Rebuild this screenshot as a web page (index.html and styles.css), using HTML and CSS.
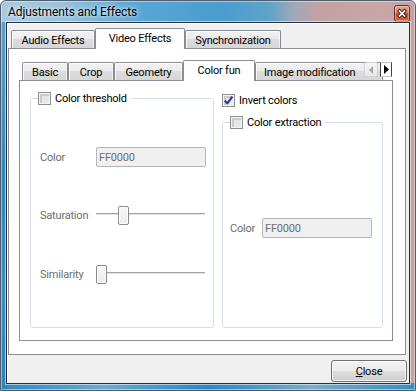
FILE: index.html
```html
<!DOCTYPE html>
<html>
<head>
<meta charset="utf-8">
<link rel="stylesheet" href="styles.css">
</head>
<body>
<div class="window">
  <div class="titlebar">
    <span class="title">Adjustments and Effects</span>
    <span class="xbtn">
      <svg width="16" height="17" viewBox="0 0 16 17">
        <defs>
          <linearGradient id="cg" x1="0" y1="0" x2="0" y2="1">
            <stop offset="0" stop-color="#e9a898"/>
            <stop offset="0.45" stop-color="#d67a66"/>
            <stop offset="0.5" stop-color="#c64a30"/>
            <stop offset="1" stop-color="#d6683e"/>
          </linearGradient>
        </defs>
        <rect x="0.5" y="0.5" width="15" height="16" rx="2.5" fill="url(#cg)" stroke="#6e2a1e"/>
        <rect x="1.5" y="1.5" width="13" height="14" rx="1.5" fill="none" stroke="#ffffff" stroke-opacity="0.35"/>
        <path d="M5.5 6 L10.5 11 M10.5 6 L5.5 11" stroke="#3a1a14" stroke-width="3.4" stroke-linecap="square"/>
        <path d="M5.5 6 L10.5 11 M10.5 6 L5.5 11" stroke="#ffffff" stroke-width="1.7" stroke-linecap="square"/>
      </svg>
    </span>
  </div>
  <div class="client">
    <div class="otabs">
      <div class="tab otab w-audio">Audio Effects</div>
      <div class="tab otab sel w-video">Video Effects</div>
      <div class="tab otab w-sync">Synchronization</div>
    </div>
    <div class="opane">
      <div class="itabs">
        <div class="tab itab w-basic">Basic</div>
        <div class="tab itab w-crop">Crop</div>
        <div class="tab itab w-geo">Geometry</div>
        <div class="tab itab sel w-fun">Color fun</div>
        <div class="tab itab w-img">Image modification</div>
        <div class="scroller">
          <span class="sbtn sbtn-left">
            <svg width="5" height="8" viewBox="0 0 5 8"><path d="M4 0 L0 4 L4 8 Z" fill="#a6a6a6"/></svg>
          </span>
          <span class="sbtn sbtn-right">
            <svg width="5" height="9" viewBox="0 0 5 9"><path d="M0 0 L5 4.5 L0 9 Z" fill="#000"/></svg>
          </span>
        </div>
      </div>
      <div class="ipane">
        <div class="group group-left">
          <div class="gtitle">
            <span class="cb"></span><span>Color threshold</span>
          </div>
          <div class="row row1">
            <span class="lbl lbl-wide">Color</span>
            <span class="field">FF0000</span>
          </div>
          <div class="row row2">
            <span class="lbl lbl-wide">Saturation</span>
            <span class="slider"><span class="thumb thumb-sat"></span></span>
          </div>
          <div class="row row3">
            <span class="lbl lbl-wide">Similarity</span>
            <span class="slider"><span class="thumb"></span></span>
          </div>
        </div>
        <div class="rcol">
          <div class="check-row">
            <span class="cb checked">
              <svg width="11" height="11" viewBox="0 0 11 11"><path d="M1.8 5.6 L4.3 8.4 L9.4 1.6" fill="none" stroke="#1d3f95" stroke-width="2.1" stroke-linejoin="round"/></svg>
            </span>
            <span>Invert colors</span>
          </div>
          <div class="group group-right">
            <div class="gtitle">
              <span class="cb"></span><span>Color extraction</span>
            </div>
            <div class="row row-ext">
              <span class="lbl lbl-narrow">Color</span>
              <span class="field">FF0000</span>
            </div>
          </div>
        </div>
      </div>
    </div>
    <div class="footer">
      <button class="btn"><span class="u">C</span>lose</button>
    </div>
  </div>
</div>
</body>
</html>
```

FILE: styles.css
```css
* {
  box-sizing: border-box;
  margin: 0;
  padding: 0;
}

body {
  margin: 0;
  width: 416px;
  height: 391px;
  overflow: hidden;
  background: #ffffff;
  font-family: Roboto, "Noto Sans", sans-serif;
  font-size: 11px;
  letter-spacing: -0.2px;
  color: #000000;
}

.window {
  width: 416px;
  height: 391px;
  display: flex;
  flex-direction: column;
  border: 1px solid #4e5e6e;
  border-radius: 6px 6px 0 0;
  background:
    linear-gradient(180deg, #5aa0cf 0%, #2f86c0 40%, #3a8ec6 70%, #2a7fbc 100%) 0 21px / 5px 100% no-repeat,
    linear-gradient(90deg, #3585c0 0%, #6aaad6 25%, #2f86c0 50%, #78acd0 75%, #3a8cc4 100%) 0 100% / 100% 7px no-repeat,
    linear-gradient(90deg, #aac9dd 0px, #96c1de 60px, #5ba7d5 130px, #4a9dcf 220px, #5ea3c8 268px, #9ea9b8 292px, #c3a1a3 318px, #c9a6a7 380px, #c3a1a4 416px);
  box-shadow: inset 0 0 0 1px rgba(255, 255, 255, 0.45);
}

.titlebar {
  height: 21px;
  display: flex;
  align-items: flex-start;
}

.title {
  padding-left: 7px;
  margin-top: 4px;
  font-size: 12px;
  letter-spacing: -0.1px;
  line-height: 15px;
  color: #000;
  text-shadow: 0 0 6px rgba(255, 255, 255, 0.9), 0 0 3px rgba(255, 255, 255, 0.8);
}

.xbtn {
  margin-left: auto;
  margin-top: 4px;
  margin-right: 5px;
  width: 16px;
  height: 17px;
  display: block;
}

.xbtn svg {
  display: block;
}

.client {
  margin-left: 5px;
  width: 404px;
  height: 362px;
  border: 1px solid #26303a;
  background: #f0f0f0;
  display: flex;
  flex-direction: column;
  box-shadow: 0 0 0 1px rgba(255, 255, 255, 0.55), inset 1px 1px 0 #ffffff;
}

/* tabs */
.otabs,
.itabs {
  height: 21px;
  display: flex;
  align-items: flex-start;
  position: relative;
  z-index: 2;
}

.otabs {
  margin-top: 5px;
  margin-left: 4px;
}

.tab {
  height: 18px;
  margin-top: 2px;
  border: 1px solid #898c95;
  border-bottom: none;
  border-radius: 2px 2px 0 0;
  background: linear-gradient(180deg, #f2f2f2 0%, #ebebeb 45%, #dddddd 50%, #d6d6d6 100%);
  box-shadow: inset 1px 1px 0 rgba(255, 255, 255, 0.8), inset -1px 0 0 rgba(255, 255, 255, 0.6);
  display: flex;
  align-items: center;
  justify-content: center;
  white-space: nowrap;
  padding-top: 1px;
  flex-shrink: 0;
}

.tab.sel {
  height: 21px;
  margin-top: 0;
  background: #ffffff;
  box-shadow: none;
  padding-top: 0;
  padding-bottom: 2px;
}

.w-audio { width: 84px; }
.w-video { width: 90px; }
.w-sync { width: 96px; }

.opane {
  margin-top: -1px;
  margin-left: 1px;
  width: 398px;
  height: 307px;
  border: 1px solid #898c95;
  background: #ffffff;
  display: flex;
  flex-direction: column;
}

.itabs {
  margin-top: 11px;
  margin-left: 13px;
  width: 370px;
  overflow: hidden;
}

.w-basic { width: 46px; }
.w-crop { width: 46px; }
.w-geo { width: 69px; }
.w-fun { width: 72px; }
.w-img { width: 128px; justify-content: flex-start; padding-left: 8px; }

.scroller {
  position: absolute;
  left: 342px;
  top: 2px;
  display: flex;
  gap: 2px;
}

.sbtn {
  width: 14px;
  height: 15px;
  display: flex;
  align-items: center;
  justify-content: center;
}

.sbtn-left {
  border: 1px solid #d2d2d2;
  border-radius: 2px;
  background: linear-gradient(180deg, #f6f6f6, #e8e8e8);
}

.sbtn-right {
  width: 12px;
  border-left: 1px solid #404040;
  border-right: 1px solid #404040;
  border-top: 1px solid #c8c8c8;
  border-bottom: 1px solid #c8c8c8;
  background: #ffffff;
}

.sbtn svg {
  display: block;
}

.ipane {
  margin-top: -1px;
  margin-left: 10px;
  width: 374px;
  height: 261px;
  border: 1px solid #898c95;
  background: #ffffff;
  display: flex;
  padding: 0 9px 12px 10px;
}

/* groups */
.group {
  border: 1px solid #d5dfe5;
  border-radius: 3px;
  display: flex;
  flex-direction: column;
}

.group-left {
  width: 184px;
  margin-top: 17px;
}

.gtitle {
  align-self: flex-start;
  display: flex;
  align-items: center;
  gap: 4px;
  height: 13px;
  margin: -7px 0 0 7px;
  padding-right: 4px;
  background: #ffffff;
  white-space: nowrap;
}

.cb {
  width: 13px;
  height: 13px;
  flex-shrink: 0;
  border: 1px solid #8e8f8f;
  background: #f4f4f4;
  box-shadow: inset 0 0 0 1px #f4f4f4, inset 1px 1px 0 2px #c8cacc, inset 0 0 0 6px #e6e6e6;
  display: flex;
  align-items: center;
  justify-content: center;
}

.cb.checked {
  box-shadow: inset 0 0 0 1px #f4f4f4, inset 1px 1px 0 2px #c8cacc, inset 0 0 0 6px #e9e9e9;
}

.cb svg {
  display: block;
}

.row {
  display: flex;
  align-items: center;
  height: 20px;
}

.row1 { margin-top: 42px; padding-left: 9px; }
.row2 { margin-top: 38px; padding-left: 9px; }
.row3 { margin-top: 39px; padding-left: 9px; }

.lbl {
  color: #6d6d6d;
  flex-shrink: 0;
}

.lbl-wide { width: 56px; }
.lbl-narrow { width: 32px; }

.field {
  width: 110px;
  height: 20px;
  border: 1px solid #b5b5b5;
  border-radius: 2px;
  background: #f0f0f0;
  color: #6d6d6d;
  display: flex;
  align-items: center;
  padding-left: 2px;
  padding-top: 1px;
}

.slider {
  width: 109px;
  height: 20px;
  display: flex;
  align-items: center;
  background: linear-gradient(180deg, transparent 8px, #a3a3a3 8px, #a3a3a3 9px, #e2e2e2 9px, #e2e2e2 10px, transparent 10px);
}

.thumb {
  width: 11px;
  height: 19px;
  border: 1px solid #8a8a8a;
  border-radius: 2px;
  background: linear-gradient(180deg, #f8f8f8 0%, #ececec 100%);
  box-shadow: inset 0 0 0 1px #ffffff;
}

.thumb-sat {
  margin-left: 22px;
}

.rcol {
  flex: 1;
  margin-left: 8px;
  margin-top: 13px;
  display: flex;
  flex-direction: column;
}

.check-row {
  display: flex;
  align-items: center;
  gap: 4px;
  height: 13px;
}

.group-right {
  flex: 1;
  margin-top: 15px;
}

.row-ext {
  margin-top: 89px;
  padding-left: 7px;
}

/* footer */
.footer {
  display: flex;
  justify-content: flex-end;
  margin-top: 5px;
  padding-right: 2px;
}

.btn {
  width: 76px;
  height: 22px;
  border: 1px solid #707070;
  border-radius: 3px;
  background: linear-gradient(180deg, #f2f2f2 0%, #ebebeb 48%, #dddddd 52%, #cfcfcf 100%);
  box-shadow: inset 0 0 0 1px rgba(255, 255, 255, 0.7);
  font-family: Roboto, "Noto Sans", sans-serif;
  font-size: 11px;
  letter-spacing: -0.2px;
  color: #000;
}

.u {
  text-decoration: underline;
}
```
